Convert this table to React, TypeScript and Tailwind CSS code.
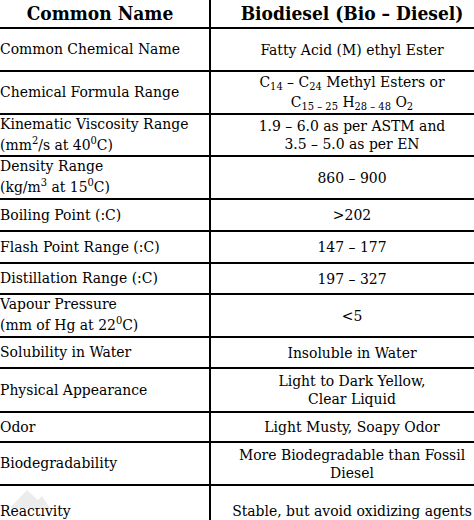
import React from "react";

type Row = { h: number; left: React.ReactNode; right: React.ReactNode };

const sub = "text-[11px] relative top-[3px] align-baseline";
const sup = "text-[11px] relative -top-[6px] align-baseline";

const rows: Row[] = [
  { h: 43, left: "Common Chemical Name", right: "Fatty Acid (M) ethyl Ester" },
  {
    h: 43,
    left: "Chemical Formula Range",
    right: (
      <>
        C<span className={sub}>14</span> – C<span className={sub}>24</span> Methyl Esters or
        <br />
        C<span className={sub}>15 – 25</span> H<span className={sub}>28 – 48</span> O<span className={sub}>2</span>
      </>
    ),
  },
  {
    h: 42,
    left: (
      <>
        Kinematic Viscosity Range
        <br />
        (mm<span className={sup}>2</span>/s at 40<span className={sup}>0</span>C)
      </>
    ),
    right: (
      <>
        1.9 – 6.0 as per ASTM and
        <br />
        3.5 – 5.0 as per EN
      </>
    ),
  },
  {
    h: 43,
    left: (
      <>
        Density Range
        <br />
        (kg/m<span className={sup}>3</span> at 15<span className={sup}>0</span>C)
      </>
    ),
    right: "860 – 900",
  },
  { h: 32, left: "Boiling Point (:C)", right: ">202" },
  { h: 32, left: "Flash Point Range (:C)", right: "147 – 177" },
  { h: 31, left: "Distillation Range (:C)", right: "197 – 327" },
  {
    h: 43,
    left: (
      <>
        Vapour Pressure
        <br />
        (mm of Hg at 22<span className={sup}>0</span>C)
      </>
    ),
    right: "<5",
  },
  { h: 31, left: "Solubility in Water", right: "Insoluble in Water" },
  {
    h: 44,
    left: "Physical Appearance",
    right: (
      <>
        Light to Dark Yellow,
        <br />
        Clear Liquid
      </>
    ),
  },
  { h: 30, left: "Odor", right: "Light Musty, Soapy Odor" },
  {
    h: 43,
    left: "Biodegradability",
    right: (
      <>
        More Biodegradable than Fossil
        <br />
        Diesel
      </>
    ),
  },
  { h: 52, left: "Reactivity", right: "Stable, but avoid oxidizing agents" },
];

export default function App() {
  return (
    <div className="relative w-[474px] h-[520px] overflow-hidden bg-white text-black [font-family:'DejaVu_Serif_Condensed','DejaVu_Serif',serif] [font-stretch:condensed]">
      <div className="ml-[-9px] w-[502px] flex flex-col">
        <div className="flex h-[29px] border-b-2 border-black">
          <div className="w-[220px] border-r-2 border-black flex items-center justify-center text-[19px] font-bold leading-none">
            Common Name
          </div>
          <div className="flex-1 flex items-center justify-center text-[19px] font-bold leading-none">
            Biodiesel (Bio – Diesel)
          </div>
        </div>
        {rows.map((r, i) => (
          <div
            key={i}
            className="flex border-b-2 border-black text-[15.5px]"
            style={{ height: r.h }}
          >
            <div className="w-[220px] shrink-0 border-r-2 border-black flex items-center pl-[9px] leading-[21px]">
              <div>{r.left}</div>
            </div>
            <div className="flex-1 flex items-center justify-center text-center leading-[18px]">
              <div>{r.right}</div>
            </div>
          </div>
        ))}
      </div>
      <svg
        className="absolute left-[10px] top-[487px]"
        width="40"
        height="22"
        viewBox="0 0 40 22"
      >
        <polygon points="0,21 17,3 28,13 32,9 40,21" fill="#ececec" />
      </svg>
    </div>
  );
}
